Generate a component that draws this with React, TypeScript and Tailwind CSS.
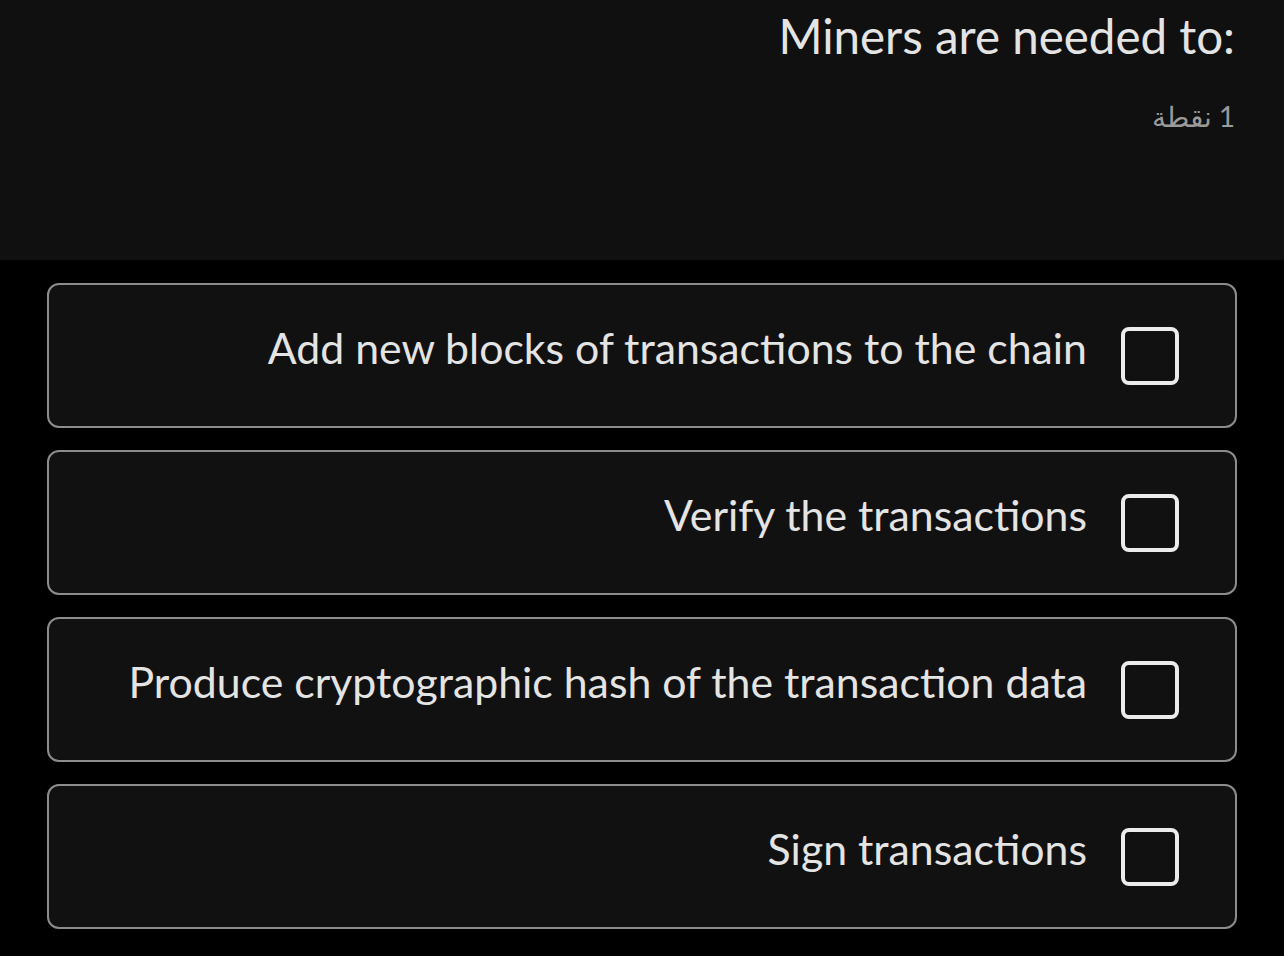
const options = [
  'Add new blocks of transactions to the chain',
  'Verify the transactions',
  'Produce cryptographic hash of the transaction data',
  'Sign transactions',
]

export default function App() {
  return (
    <div className="min-h-[956px] bg-black font-['Lato',sans-serif] text-[#e4e4e4]">
      <div className="flex h-[260px] flex-col items-end bg-[#101010] px-[49px] pt-[6px]">
        <h1 className="text-[47.5px] leading-[60px]">Miners are needed to:</h1>
        <p dir="rtl" className="mt-[32px] text-[28px] leading-[36px] text-[#9a9a9a]">
          1 نقطة
        </p>
      </div>
      <div className="flex flex-col gap-[22px] px-[47px] pt-[23px]">
        {options.map((label) => (
          <label
            key={label}
            className="flex h-[145px] cursor-pointer items-center justify-end gap-[34px] rounded-[12px] border-2 border-[#8c8c8c] bg-[#111111] pr-[56px]"
          >
            <span className="mb-[14px] text-[42.8px] leading-none">{label}</span>
            <span className="h-[58px] w-[58px] shrink-0 rounded-[8px] border-[4px] border-[#ececec]" />
          </label>
        ))}
      </div>
    </div>
  )
}
